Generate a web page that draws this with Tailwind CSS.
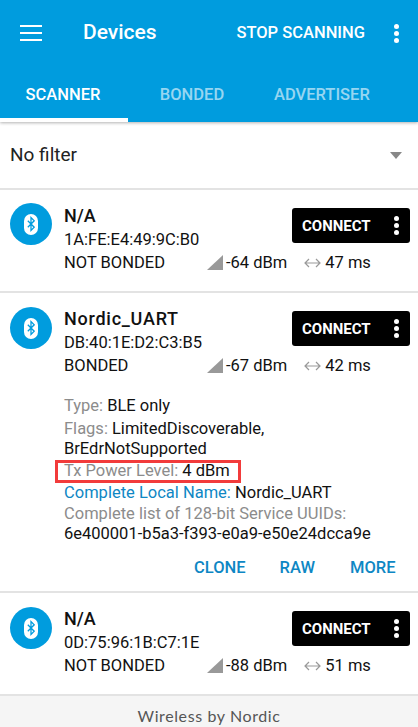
<!DOCTYPE html>
<html lang="en">
<head>
    <meta charset="UTF-8">
    <meta name="viewport" content="width=device-width, initial-scale=1.0">
    <title>Devices</title>
    <script src="https://cdn.jsdelivr.net/npm/@tailwindcss/browser@4"></script>
</head>
<body class="bg-white font-['Roboto',sans-serif] text-[#111] overflow-hidden">
<div class="w-[418px] h-[727px] flex flex-col overflow-hidden">
    <!-- Toolbar -->
    <header class="bg-[#009cde] h-[122px] flex flex-col shrink-0 shadow-[0_1px_3px_rgba(0,0,0,0.3)] z-10">
        <div class="h-[66px] flex items-center text-white">
            <svg class="ml-[20px] w-[22px] h-[16px]" viewBox="0 0 22 16"><path d="M0 1h22M0 8h22M0 15h22" stroke="#fff" stroke-width="2"/></svg>
            <span class="ml-[41px] text-[21px] font-medium">Devices</span>
            <span class="ml-auto text-[16.5px] font-medium">STOP SCANNING</span>
            <svg class="ml-[29px] mr-[19px] w-[5px] h-[19px]" viewBox="0 0 5 19" fill="#fff"><circle cx="2.5" cy="2.5" r="2.5"/><circle cx="2.5" cy="9.5" r="2.5"/><circle cx="2.5" cy="16.5" r="2.5"/></svg>
        </div>
        <nav class="flex-1 flex text-[16.5px] font-medium">
            <div class="w-[128px] flex items-center justify-center pt-[7px] pr-[2px] border-b-[4px] border-white text-white">SCANNER</div>
            <div class="w-[128px] flex items-center justify-center pt-[7px] pb-[4px] text-white/60">BONDED</div>
            <div class="flex-1 flex items-center pl-[18px] pt-[7px] pb-[4px] text-white/60">ADVERTISER</div>
        </nav>
    </header>

    <!-- Filter -->
    <div class="h-[66px] flex items-center pl-[10px] pr-[16px] pt-[1px] text-[19px] text-[#222] shrink-0">
        <span>No filter</span>
        <svg class="ml-auto w-[12px] h-[7px]" viewBox="0 0 12 7"><path d="M0 0h12L6 7z" fill="#888"/></svg>
    </div>
    <div class="h-[2px] bg-[#e3e3e3] shrink-0"></div>

    <!-- Device 1 -->
    <section class="h-[101px] shrink-0 flex pl-[10px] pt-[14px]">
        <div class="w-[42px] h-[42px] -mt-[1px] mr-[12px] shrink-0 rounded-full bg-[#009cde] flex items-center justify-center">
            <div class="w-[14px] h-[21px] rounded-full bg-white flex items-center justify-center">
                <svg class="w-[8px] h-[16px]" viewBox="0 0 10 18" fill="none" stroke="#009cde" stroke-width="1.6"><path d="M1 5l8 8-4 4V1l4 4-8 8"/></svg>
            </div>
        </div>
        <div class="w-[346px]">
            <div class="flex justify-between">
                <div>
                    <div class="text-[18px] font-medium leading-[24px]">N/A</div>
                    <div class="text-[16.5px] leading-[23px]">1A:FE:E4:49:9C:B0</div>
                </div>
                <button class="mt-[4px] w-[118px] h-[35px] rounded-[3px] bg-black text-white text-[15px] font-bold flex items-center pl-[10px]">
                    <span class="pt-[1px]">CONNECT</span>
                    <svg class="ml-auto mr-[11px] w-[5px] h-[19px]" viewBox="0 0 5 19" fill="#fff"><circle cx="2.5" cy="2.5" r="2.5"/><circle cx="2.5" cy="9.5" r="2.5"/><circle cx="2.5" cy="16.5" r="2.5"/></svg>
                </button>
            </div>
            <div class="flex items-center text-[16.5px] leading-[23px]">
                <span class="w-[143px]">NOT BONDED</span>
                <svg class="w-[16px] h-[15px]" viewBox="0 0 16 15"><path d="M0 15L16 0v15z" fill="#999"/></svg>
                <span class="ml-[3px]">-64 dBm</span>
                <svg class="ml-[17px] w-[17px] h-[10px]" viewBox="0 0 17 10" fill="none" stroke="#999" stroke-width="1.2"><path d="M1 5h15M5 1L1 5l4 4M12 1l4 4-4 4"/></svg>
                <span class="ml-[4px]">47 ms</span>
            </div>
        </div>
    </section>
    <div class="h-[2px] bg-[#e3e3e3] shrink-0"></div>

    <!-- Device 2 -->
    <section class="h-[298px] shrink-0 flex pl-[10px] pt-[14px]">
        <div class="w-[42px] h-[42px] mr-[12px] shrink-0 rounded-full bg-[#009cde] flex items-center justify-center">
            <div class="w-[14px] h-[21px] rounded-full bg-white flex items-center justify-center">
                <svg class="w-[8px] h-[16px]" viewBox="0 0 10 18" fill="none" stroke="#009cde" stroke-width="1.6"><path d="M1 5l8 8-4 4V1l4 4-8 8"/></svg>
            </div>
        </div>
        <div class="w-[346px]">
            <div class="flex justify-between">
                <div>
                    <div class="text-[18px] font-medium leading-[24px] tracking-[0.75px]">Nordic_UART</div>
                    <div class="text-[16.5px] leading-[23px]">DB:40:1E:D2:C3:B5</div>
                </div>
                <button class="mt-[4px] w-[118px] h-[35px] rounded-[3px] bg-black text-white text-[15px] font-bold flex items-center pl-[10px]">
                    <span class="pt-[1px]">CONNECT</span>
                    <svg class="ml-auto mr-[11px] w-[5px] h-[19px]" viewBox="0 0 5 19" fill="#fff"><circle cx="2.5" cy="2.5" r="2.5"/><circle cx="2.5" cy="9.5" r="2.5"/><circle cx="2.5" cy="16.5" r="2.5"/></svg>
                </button>
            </div>
            <div class="flex items-center text-[16.5px] leading-[23px]">
                <span class="w-[143px]">BONDED</span>
                <svg class="w-[16px] h-[15px]" viewBox="0 0 16 15"><path d="M0 15L16 0v15z" fill="#999"/></svg>
                <span class="ml-[3px]">-67 dBm</span>
                <svg class="ml-[17px] w-[17px] h-[10px]" viewBox="0 0 17 10" fill="none" stroke="#999" stroke-width="1.2"><path d="M1 5h15M5 1L1 5l4 4M12 1l4 4-4 4"/></svg>
                <span class="ml-[4px]">42 ms</span>
            </div>

            <div class="mt-[19px] text-[16.5px] leading-[20px]">
                <div><span class="text-[#8c8c8c]">Type:</span> BLE only</div>
                <div class="mt-[3px]"><span class="text-[#8c8c8c]">Flags:</span> LimitedDiscoverable,<br>BrEdrNotSupported</div>
                <div class="mt-[2px] relative">
                    <span class="text-[#8c8c8c]">Tx Power Level:</span> 4 dBm
                    <div class="absolute -left-[9px] -top-[1px] w-[186px] h-[23px] border-[3px] border-[#f23b3b]"></div>
                </div>
                <div class="mt-[1.5px]"><span class="text-[#0e87c4]">Complete Local Name:</span> Nordic_UART</div>
                <div class="mt-[1.5px] text-[#8c8c8c]">Complete list of 128-bit Service UUIDs:</div>
                <div>6e400001-b5a3-f393-e0a9-e50e24dcca9e</div>
            </div>
            <div class="mt-[12px] ml-[130px] flex text-[16.5px] font-medium text-[#0e87c4] leading-[23px]">
                <span>CLONE</span>
                <span class="ml-[34px]">RAW</span>
                <span class="ml-[35px]">MORE</span>
            </div>
        </div>
    </section>
    <div class="h-[2px] bg-[#e3e3e3] shrink-0"></div>

    <!-- Device 3 -->
    <section class="h-[101px] shrink-0 flex pl-[10px] pt-[14px]">
        <div class="w-[42px] h-[42px] mr-[12px] shrink-0 rounded-full bg-[#009cde] flex items-center justify-center">
            <div class="w-[14px] h-[21px] rounded-full bg-white flex items-center justify-center">
                <svg class="w-[8px] h-[16px]" viewBox="0 0 10 18" fill="none" stroke="#009cde" stroke-width="1.6"><path d="M1 5l8 8-4 4V1l4 4-8 8"/></svg>
            </div>
        </div>
        <div class="w-[346px]">
            <div class="flex justify-between">
                <div>
                    <div class="text-[18px] font-medium leading-[24px]">N/A</div>
                    <div class="text-[16.5px] leading-[23px]">0D:75:96:1B:C7:1E</div>
                </div>
                <button class="mt-[4px] w-[118px] h-[35px] rounded-[3px] bg-black text-white text-[15px] font-bold flex items-center pl-[10px]">
                    <span class="pt-[1px]">CONNECT</span>
                    <svg class="ml-auto mr-[11px] w-[5px] h-[19px]" viewBox="0 0 5 19" fill="#fff"><circle cx="2.5" cy="2.5" r="2.5"/><circle cx="2.5" cy="9.5" r="2.5"/><circle cx="2.5" cy="16.5" r="2.5"/></svg>
                </button>
            </div>
            <div class="flex items-center text-[16.5px] leading-[23px]">
                <span class="w-[143px]">NOT BONDED</span>
                <svg class="w-[16px] h-[15px]" viewBox="0 0 16 15"><path d="M0 15L16 0v15z" fill="#999"/></svg>
                <span class="ml-[3px]">-88 dBm</span>
                <svg class="ml-[17px] w-[17px] h-[10px]" viewBox="0 0 17 10" fill="none" stroke="#999" stroke-width="1.2"><path d="M1 5h15M5 1L1 5l4 4M12 1l4 4-4 4"/></svg>
                <span class="ml-[4px]">51 ms</span>
            </div>
        </div>
    </section>

    <!-- Footer -->
    <footer class="flex-1 bg-[#f5f5f5] border-t-2 border-[#e3e3e3] flex items-center justify-center pt-[8px] font-['Lato',sans-serif] text-[16px] text-[#555] tracking-[0.6px]">Wireless by Nordic</footer>
</div>
</body>
</html>
